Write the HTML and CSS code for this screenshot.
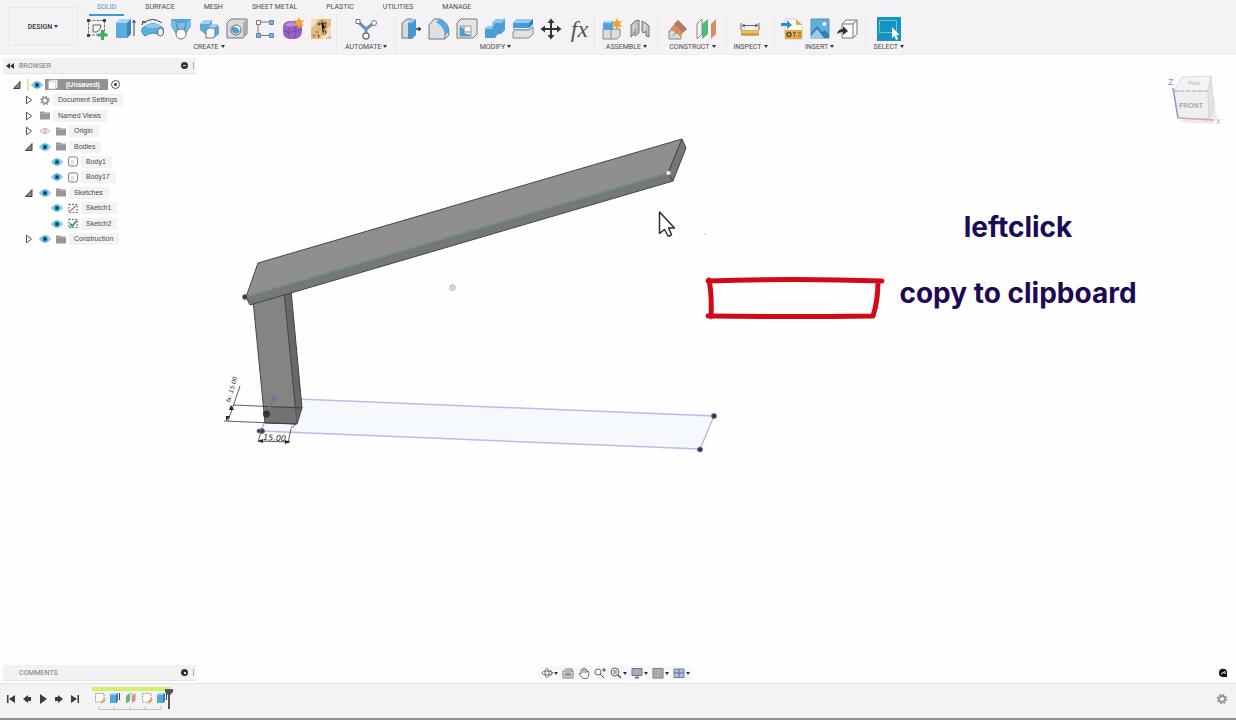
FILE: index.html
```html
<!DOCTYPE html>
<html lang="en">
<head>
<meta charset="utf-8">
<title>Design workspace</title>
<link rel="stylesheet" href="styles.css">
</head>
<body>
<svg class="defs" aria-hidden="true">
  <symbol id="eye" viewBox="0 0 12 10"><path d="M.5 5Q6-1.600 11.500 5Q6 11.600.5 5Z" fill="#9fd8ef" stroke="#4fb3d9"/><circle cx="6" cy="5" r="2.600" fill="#1486b8"/><circle cx="6" cy="5" r="1.300" fill="#0c2f42"/></symbol>
  <symbol id="eye-off" viewBox="0 0 12 10"><path d="M1 5Q6 0 11 5Q6 10 1 5Z" fill="none" stroke="#b9b9bd"/><path d="M3 8.500L9 1.500" stroke="#cfcfd3" stroke-width=".8"/><circle cx="6" cy="5" r="1.500" fill="none" stroke="#b9b9bd"/></symbol>
  <symbol id="folder" viewBox="0 0 12 10"><path d="M1 1H5L6 2H11V9H1Z" fill="#97979a"/><path d="M1 3H11" stroke="#b5b5b8" stroke-width=".7"/></symbol>
  <symbol id="gear" viewBox="0 0 12 12"><circle cx="6" cy="6" r="4.300" fill="none" stroke="#929295" stroke-width="2" stroke-dasharray="1.700 1.680"/><circle cx="6" cy="6" r="2.900" fill="none" stroke="#929295" stroke-width="1.700"/></symbol>
  <symbol id="closed" viewBox="0 0 8 10"><path d="M1.500 1.200V8.800L6.500 5Z" fill="#fff" stroke="#555"/></symbol>
  <symbol id="open" viewBox="0 0 8 10"><path d="M7 1.500V8.500H.5Z" fill="#888" stroke="#444"/></symbol>
  <symbol id="body" viewBox="0 0 12 12"><rect x="1" y="1" width="10" height="10" rx="2.500" fill="#fff" stroke="#6b6b70"/><path d="M4 5H6.500V9H4Z" fill="none" stroke="#c4c4c8" stroke-width=".8"/></symbol>
  <symbol id="s-cube" viewBox="0 0 12 12"><path d="M1 3L3 1H9V9L7 11H1Z" fill="#55a7dc"/><path d="M1 3L3 1H9L7 3Z" fill="#9ed2f0"/><path d="M7 3L9 1V9L7 11Z" fill="#2f7fb5"/><path d="M10.500 1V8" stroke="#444"/></symbol>
  <symbol id="s-sketch" viewBox="0 0 12 12"><path d="M1.500 1.500H10V10H1.500Z" fill="#fdfbf8" stroke="#888" stroke-width=".8" stroke-dasharray="2 1"/><path d="M7 11L11 7" stroke="#e0a445" stroke-width="2"/></symbol>
  <symbol id="s-plane" viewBox="0 0 12 12"><path d="M1 4L5 1V9L1 11.500Z" fill="#67b77d"/><path d="M7 3.500L10.500 1V8.500L7 11Z" fill="#d69268"/><path d="M5 2L7 1V9" stroke="#bbb" fill="none"/></symbol>
</svg>

<header class="ribbon">
  <button class="workspace-switch" type="button">DESIGN <span class="caret"></span></button>
  <div class="ribbon-main">
    <nav class="tabs">
      <button class="tab active" type="button">SOLID</button>
      <button class="tab" type="button">SURFACE</button>
      <button class="tab" type="button">MESH</button>
      <button class="tab" type="button">SHEET METAL</button>
      <button class="tab" type="button">PLASTIC</button>
      <button class="tab" type="button">UTILITIES</button>
      <button class="tab" type="button">MANAGE</button>
    </nav>
    <div class="groups">
      <section class="group">
        <div class="tools">
          <button type="button" aria-label="Create sketch"><svg viewBox="0 0 24 24"><path d="M3.500 3.500H19.500V18H3.500Z" fill="none" stroke="#777" stroke-dasharray="3 1"/><path d="M8 8V15H12Q16 13 16 8Z" fill="none" stroke="#666"/><g fill="#444"><path d="M2 2h3v3H2zM18 2h3v3h-3zM2 17h3v3H2z"/></g><path d="M17.500 13V23M12.500 18H22.500" stroke="#35b35c" stroke-width="3"/></svg></button>
          <button type="button" aria-label="Extrude"><svg viewBox="0 0 24 24"><path d="M3 6L7 2H18V17L14 21H3Z" fill="#5cabdf"/><path d="M3 6L7 2H18L14 6Z" fill="#a5d6f1"/><path d="M14 6L18 2V17L14 21Z" fill="#3886bb"/><path d="M21 19V4M19.500 6L21 3L22.500 6" stroke="#444" fill="none"/></svg></button>
          <button type="button" aria-label="Revolve"><svg viewBox="0 0 24 24"><path d="M1.500 11Q12 2 22 11Q24 15 20 19Q12 13 4 19Q-1 15 1.500 11Z" fill="#5daee1" stroke="#3d8cc0"/><path d="M3 9Q12 4 21 9Q12 13 3 9Z" fill="#92cbee"/><ellipse cx="19.500" cy="15" rx="3" ry="4" fill="#e8f1f8" stroke="#667"/><path d="M2 6Q12-1 21 6M1 8L2 4L5 6" fill="none" stroke="#444"/></svg></button>
          <button type="button" aria-label="Sweep"><svg viewBox="0 0 24 24"><path d="M2 2H22V9L15 20H9L2 9Z" fill="#55a6da"/><path d="M2 2L7 6H17L22 2V9L16 15H8L2 9Z" fill="#78bde8"/><path d="M7 6L9 14M17 6L15 14" stroke="#3583b8"/><circle cx="12" cy="17" r="5" fill="#fff" stroke="#777"/></svg></button>
          <button type="button" aria-label="Loft"><svg viewBox="0 0 24 24"><path d="M3 7L7 3H15V7H20L22 10V17L17 21L8 17L3 13Z" fill="#5aaade"/><path d="M3 7L7 3H15L12 7ZM11 11L15 7H21L18 11Z" fill="#a1d2f0"/><path d="M9 13L12 11H18V19L16 21H9Z" fill="#f4f5f8" stroke="#777"/></svg></button>
          <button type="button" aria-label="Hole"><svg viewBox="0 0 24 24"><path d="M2 6L6 2H22V17L18 21H2Z" fill="#d9dadd" stroke="#777"/><path d="M18 6L22 2V17L18 21Z" fill="#aaacb1"/><circle cx="11" cy="13" r="5" fill="#fff" stroke="#666"/><path d="M7 10Q13 9 15 15Q9 19 7 14Z" fill="#549cd0"/></svg></button>
          <button type="button" aria-label="Rectangular pattern"><svg viewBox="0 0 24 24"><path d="M7 5H17M5 8V16M7 18.500H17" stroke="#777"/><path d="M3.500 3.500h4v4h-4z" fill="#fff" stroke="#777"/><path d="M16.500 3.500h4v4h-4zM3.500 16.500h4v4h-4zM16.500 16.500h4v4h-4z" fill="#7bb6dd" stroke="#568baf"/></svg></button>
          <button type="button" aria-label="Create form"><svg viewBox="0 0 24 24"><path d="M2 11Q2 4 9 4H14Q21 5 21 12V15Q20 22 13 22H9Q2 21 2 15Z" fill="#9762c8"/><path d="M4 8Q8 4 14 6Q16 8 12 9Q7 11 4 8Z" fill="#bc92df"/><path d="M3 14Q9 17 14 14L21 12M14 9Q16 15 13 22M8 11L8 21" stroke="#7a48a8" fill="none"/><path d="M18 0L19.500 3.500L23 3L21 6L23 9L19.500 8.500L18 12L16.500 8.500L13 9L15 6L13 3L16.500 3.500Z" fill="#eda52d"/></svg></button>
          <button type="button" aria-label="Texture"><svg viewBox="0 0 24 24"><path d="M2 2H22V22H2Z" fill="#dfbf88"/><path d="M2 2H9L5 9L2 11ZM17 12L22 9V18L16 22H11Z" fill="#f0dfbd"/><path d="M4 20L11 12M12 3L17 9L14 18" stroke="#c4934f" stroke-width="3" stroke-dasharray="3 2"/><path d="M8 7l3-2 1 2-2 2zM15 4l3 2-2 2zM16 13l2 2-2 3zM9 17l2 2-2 2z" fill="#745025"/></svg></button>
        </div>
        <button class="menu" type="button">CREATE <span class="caret"></span></button>
      </section>
      <section class="group wide">
        <div class="tools">
          <button type="button" aria-label="Automate"><svg viewBox="0 0 24 24"><path d="M4 5L12 12L20 6M12 12V18" stroke="#6894b5" stroke-width="3" fill="none"/><path d="M2 2.500h4v4H2z" fill="#fff" stroke="#777"/><circle cx="20" cy="6" r="2.500" fill="#fff" stroke="#777"/><circle cx="12" cy="19" r="3" fill="#fff" stroke="#777" stroke-width="1.500"/></svg></button>
        </div>
        <button class="menu" type="button">AUTOMATE <span class="caret"></span></button>
      </section>
      <section class="group">
        <div class="tools">
          <button type="button" aria-label="Press pull"><svg viewBox="0 0 24 24"><path d="M3 6L8 2H13V21H3Z" fill="#d7d8db" stroke="#777"/><path d="M9 6L13 2H17V18L13 22H9Z" fill="#4398d0"/><path d="M9 6L13 2H17L13 6Z" fill="#91cbee"/><path d="M17 12H20" stroke="#333" stroke-width="1.500"/><path d="M19.500 9.500L22.500 12L19.500 14.500Z" fill="#333"/></svg></button>
          <button type="button" aria-label="Fillet"><svg viewBox="0 0 24 24"><path d="M2 8L7 2H13Q22 6 22 15V18L18 22H2Z" fill="#dfe0e3" stroke="#777"/><path d="M9 5L13 2Q22 6 22 15L18 18Q17 10 9 5Z" fill="#54a8dd"/><path d="M18 17V22" stroke="#777"/></svg></button>
          <button type="button" aria-label="Shell"><svg viewBox="0 0 24 24"><path d="M2 6L6 2H22V17L18 21H2Z" fill="#e4e5e7" stroke="#777"/><path d="M5 9H16V19H5Z" fill="#f8f8fa" stroke="#999"/><path d="M5 9L9 12V16L16 18L15 19H5Z" fill="#4c9ed2"/><path d="M9 9V15H16" stroke="#888" fill="none"/></svg></button>
          <button type="button" aria-label="Combine"><svg viewBox="0 0 24 24"><path d="M2 12L5 9H9V6L13 2H22V13L18 17H15L12 21H2Z" fill="#4c9fd5"/><path d="M2 12L5 9H9L9 6L13 2H22L19 6H12L9 12Z" fill="#8dc9ed"/></svg></button>
          <button type="button" aria-label="Split body"><svg viewBox="0 0 24 24"><path d="M2 6L6 2H22L18 6V11H2Z" fill="#459bd2"/><path d="M2 6L6 2H22L18 6Z" fill="#92cbef"/><path d="M18 6L22 2V7L18 11Z" fill="#3183b8"/><path d="M2 15L4 13H18L22 10V17L18 21H2Z" fill="#e1e2e5" stroke="#888"/><path d="M2 12.500H18L22 8.500" stroke="#64b5e5" fill="none"/></svg></button>
          <button type="button" aria-label="Move"><svg viewBox="0 0 24 24"><path d="M12 4V20M4 12H20" stroke="#333" stroke-width="2"/><path d="M12 1.500L15.500 6H8.500ZM12 22.500L8.500 18H15.500ZM1.500 12L6 8.500V15.500ZM22.500 12L18 8.500V15.500Z" fill="#333"/></svg></button>
          <button class="fx" type="button" aria-label="Parameters">fx</button>
        </div>
        <button class="menu" type="button">MODIFY <span class="caret"></span></button>
      </section>
      <section class="group narrow">
        <div class="tools">
          <button type="button" aria-label="New component"><svg viewBox="0 0 24 24"><path d="M3 12H20V19L17 22H3Z" fill="#dcdde0" stroke="#888"/><path d="M11 12V22" stroke="#888"/><path d="M3 6L5 4H13V13H3Z" fill="#52a5dc"/><path d="M3 6L5 4H13L11 6Z" fill="#a5d6f1"/><path d="M17 1L18.500 4.500L22 4L20 7L22 10L18.500 9.500L17 13L15.500 9.500L12 10L14 7L12 4L15.500 4.500Z" fill="#e8a62b"/></svg></button>
          <button type="button" aria-label="Joint"><svg viewBox="0 0 24 24"><path d="M3 8L7 4L11 3V16L7 19V12L5 18L3 20ZM14 4L19 7L21 9V20L18 19V14L16 16L14 15Z" fill="#bfc1c4" stroke="#777"/><path d="M6 8V15M17 7V13" stroke="#eee"/></svg></button>
        </div>
        <button class="menu" type="button">ASSEMBLE <span class="caret"></span></button>
      </section>
      <section class="group medium">
        <div class="tools">
          <button type="button" aria-label="Offset plane"><svg viewBox="0 0 24 24"><path d="M3 14L12 11L15 17V22H3Z" fill="#dcdcd9" stroke="#888"/><path d="M4 12L12 3L21 12L14 19Z" fill="#d78d66"/><path d="M9 7L17 15M12 13L7 19" stroke="#6d9870"/><path d="M12 3L21 12L17 15L8 7Z" fill="#b67761"/></svg></button>
          <button type="button" aria-label="Midplane"><svg viewBox="0 0 24 24"><path d="M3 7L8 2V17L3 22Z" fill="#f4f4f5" stroke="#888"/><path d="M8 7L14 2V17L8 22Z" fill="#55b775"/><path d="M17 7L22 2V17L17 22Z" fill="#dc8b68"/></svg></button>
        </div>
        <button class="menu" type="button">CONSTRUCT <span class="caret"></span></button>
      </section>
      <section class="group medium">
        <div class="tools">
          <button type="button" aria-label="Measure"><svg viewBox="0 0 24 24"><path d="M3 6V13M21 6V13M4 8.500H20M7 7L4 8.500L7 10M17 7L20 8.500L17 10" stroke="#666" fill="none"/><path d="M3 13H21V18H3Z" fill="#e2ac42"/><path d="M5 15H20" stroke="#fff3c9" stroke-dasharray="1 1"/><path d="M3 18H21" stroke="#a17a31"/></svg></button>
        </div>
        <button class="menu" type="button">INSPECT <span class="caret"></span></button>
      </section>
      <section class="group narrow">
        <div class="tools">
          <button type="button" aria-label="Insert derive"><svg viewBox="0 0 24 24"><path d="M5 2H16L22 8V22H5Z" fill="#fff" stroke="#ccc"/><path d="M16 2L22 8H16ZM5 13H22V22H5Z" fill="#e6a93b"/><path d="M1 6H7V3L12 8L7 12V9H1Z" fill="#348bc3"/><circle cx="9" cy="17.500" r="2" fill="none" stroke="#554" stroke-width="1.500"/><path d="M13 15.500H16M14.500 15V20M18 16H21M18 19H21" stroke="#665"/></svg></button>
          <button type="button" aria-label="Canvas"><svg viewBox="0 0 24 24"><path d="M3 2H21V21H3Z" fill="#62ade0" stroke="#5b93bb"/><path d="M3 16L9 9L14 15L17 13L21 18V21H3Z" fill="#3280b3"/><path d="M3 19L9 12L16 21H3Z" fill="#9acbe8"/><circle cx="16.500" cy="7" r="2" fill="#f2faff"/></svg></button>
          <button type="button" aria-label="Insert component"><svg viewBox="0 0 24 24"><path d="M6 7L10 3H21V17L17 21H6Z" fill="#fafafc" stroke="#777"/><path d="M6 7H17V21M17 7L21 3" fill="none" stroke="#777"/><path d="M1 17Q2 12 7 12V9L12 14L7 18V15Q4 15 1 17Z" fill="#333"/></svg></button>
        </div>
        <button class="menu" type="button">INSERT <span class="caret"></span></button>
      </section>
      <section class="group wide last">
        <div class="tools">
          <button type="button" aria-label="Select"><svg viewBox="0 0 24 24"><path d="M0 0H24V24H0Z" fill="#1594c2"/><path d="M2.500 3.500H19.500V15.500H2.500Z" fill="none" stroke="#8de0d3" stroke-dasharray="2 1"/><path d="M15 10V21L17.500 19L19 23L21 22L19.500 18H22.500Z" fill="#fff"/></svg></button>
        </div>
        <button class="menu" type="button">SELECT <span class="caret"></span></button>
      </section>
    </div>
  </div>
</header>

<main class="workspace">
  <svg class="scene" viewBox="0 55 1236 628" preserveAspectRatio="xMinYMin meet">
    <polygon points="274,398 714,416 700,449 261,431" fill="#f5f9fe" stroke="#c8b5e8" stroke-width="1.500"/>
    <g stroke="#454545" stroke-linejoin="round">
      <polygon points="253,300 285,291 297,424 265,423" fill="#848583"/>
      <polygon points="284,292 291,290 302,408 297,424" fill="#686966"/>
      <polygon points="258,263 682,139 668,173 246,297" fill="#8f8f8d"/>
      <polygon points="246,297 668,173 673,181 250,305" fill="#747977"/>
      <polygon points="682,139 686,148 673,181 668,173" fill="#777671"/>
    </g>
    <path d="M246 297L668 173" stroke="#7fa7b1"/>
    <polygon points="265,406 302,407 297,424 265,423" fill="#666765" opacity=".6"/>
    <g fill="none" stroke="#333"><path d="M233 405L302 408M224 421L296 424M240 386L228 421M261 432L258 442M291 429L288 443M258 441L290 442M291 428L296 424" stroke-width=".8"/><path d="M266 415L273 400" stroke="#777" stroke-width="2"/></g>
    <path d="M231 405L234 410H229ZM226 421L230 416L226 416ZM258 441L263 439V443ZM290 442L285 440V444Z" fill="#222"/>
    <g fill="#393348" stroke="#766f94"><circle cx="245" cy="297" r="2.500"/><circle cx="714" cy="416" r="2.500"/><circle cx="700" cy="449.500" r="2.500"/><circle cx="262" cy="431" r="2.500"/><circle cx="259" cy="431" r="2"/></g>
    <circle cx="266.500" cy="414" r="3.500" fill="#333"/>
    <circle cx="274" cy="398" r="3" fill="#79719e"/>
    <circle cx="668.500" cy="173" r="2" fill="#fff"/>
    <circle cx="452.500" cy="287.500" r="3" fill="#d5d5d5" stroke="#b9b9b9" stroke-width=".7"/>
    <circle cx="705" cy="234" r=".7" fill="#aaa"/>
    <text class="dimension" x="263" y="440" transform="rotate(3 263 440)">15.00</text>
    <text class="dimension side" x="230" y="403" transform="rotate(-74 230 403)">fx: 15.00</text>
    <path d="M659.500 212V233.500L664.500 229.500L668 236Q670 236.500 671.500 234.500L668.500 228H674.500Z" fill="#fff" stroke="#2f2b35" stroke-width="1.500" stroke-linejoin="round"/>
    <path d="M708 281Q795 278 882 281M709 280Q712 294 711 317M878 281Q878 301 873 316M708 316Q790 317 873 316" fill="none" stroke="#d20a18" stroke-width="5" stroke-linecap="round" stroke-linejoin="round"/>
    <text class="note" x="1018" y="237" text-anchor="middle">leftclick</text>
    <text class="note" x="1018" y="303" text-anchor="middle">copy to clipboard</text>
    <g stroke="#d4d4d8" stroke-width=".8">
      <path d="M1180 122L1212 124L1217 118L1213 92Z" fill="#dedce0" stroke="none" opacity=".6"/>
      <polygon points="1182,77 1211,76 1208,91 1174,91" fill="#f4f4f6"/>
      <polygon points="1174,91 1208,91 1209,119 1178,118" fill="#efeff1"/>
      <polygon points="1208,91 1211,76 1214,108 1209,119" fill="#e2e2e5"/>
      <path d="M1174 91H1208" stroke="#aaa" stroke-dasharray="4 2"/>
    </g>
    <path d="M1173 88L1178 118" stroke="#9490dc" stroke-width="1.500"/><path d="M1178 118L1214 120" stroke="#e2a0aa" stroke-width="1.500"/>
    <text class="cube-face" x="1191" y="108" text-anchor="middle">FRONT</text><text class="cube-top" x="1194" y="85" text-anchor="middle">Point</text>
    <text class="axis-z" x="1168" y="85">Z</text><text class="axis-x" x="1216" y="124">X</text>
  </svg>

  <aside class="browser">
    <div class="panel-head"><svg class="collapse" viewBox="0 0 8 6"><path d="M4 0V6L0 3ZM8 0V6L4 3Z" fill="#333"/></svg><span>BROWSER</span><button class="dot minus" type="button" aria-label="Minimize browser"></button><i class="grip"></i></div>
    <ul class="tree">
      <li class="root"><button type="button" aria-label="Collapse"><svg><use href="#open"/></svg></button><i class="active-bar"></i><button type="button" aria-label="Visibility"><svg><use href="#eye"/></svg></button><span class="chip"><svg viewBox="0 0 12 12"><path d="M1 3L3 1H11V9L9 11H1Z" fill="#fff" stroke="#bbb"/><path d="M1 3H9V11M9 3L11 1" fill="none" stroke="#ccc"/></svg>(Unsaved)</span><input type="radio" checked aria-label="Activate component"></li>
      <li><button type="button" aria-label="Expand"><svg><use href="#closed"/></svg></button><svg class="icon"><use href="#gear"/></svg><span class="label">Document Settings</span></li>
      <li><button type="button" aria-label="Expand"><svg><use href="#closed"/></svg></button><svg class="icon"><use href="#folder"/></svg><span class="label">Named Views</span></li>
      <li><button type="button" aria-label="Expand"><svg><use href="#closed"/></svg></button><button type="button" aria-label="Visibility"><svg><use href="#eye-off"/></svg></button><svg class="icon"><use href="#folder"/></svg><span class="label">Origin</span></li>
      <li><button type="button" aria-label="Collapse"><svg><use href="#open"/></svg></button><button type="button" aria-label="Visibility"><svg><use href="#eye"/></svg></button><svg class="icon"><use href="#folder"/></svg><span class="label">Bodies</span></li>
      <li class="leaf"><button type="button" aria-label="Visibility"><svg><use href="#eye"/></svg></button><svg class="icon"><use href="#body"/></svg><span class="label">Body1</span></li>
      <li class="leaf"><button type="button" aria-label="Visibility"><svg><use href="#eye"/></svg></button><svg class="icon"><use href="#body"/></svg><span class="label">Body17</span></li>
      <li><button type="button" aria-label="Collapse"><svg><use href="#open"/></svg></button><button type="button" aria-label="Visibility"><svg><use href="#eye"/></svg></button><svg class="icon"><use href="#folder"/></svg><span class="label">Sketches</span></li>
      <li class="leaf"><button type="button" aria-label="Visibility"><svg><use href="#eye"/></svg></button><svg class="icon" viewBox="0 0 12 12"><path d="M1.500 1.500H10.500V10.500H1.500Z" fill="#fff" stroke="#444" stroke-dasharray="2 1.500"/><path d="M3 9L9 3" stroke="#d0754d" stroke-width="1.500"/></svg><span class="label">Sketch1</span></li>
      <li class="leaf"><button type="button" aria-label="Visibility"><svg><use href="#eye"/></svg></button><svg class="icon" viewBox="0 0 12 12"><path d="M1.500 1.500H10.500V10.500H1.500Z" fill="#fff" stroke="#444" stroke-dasharray="2 1.500"/><path d="M3 6L5 9L10 3" stroke="#379b54" stroke-width="2" fill="none"/></svg><span class="label">Sketch2</span></li>
      <li><button type="button" aria-label="Expand"><svg><use href="#closed"/></svg></button><button type="button" aria-label="Visibility"><svg><use href="#eye"/></svg></button><svg class="icon"><use href="#folder"/></svg><span class="label">Construction</span></li>
    </ul>
  </aside>

  <div class="dock">
    <div class="panel-head comments"><span>COMMENTS</span><button class="dot plus" type="button" aria-label="Add comment"></button><i class="grip"></i></div>
    <div class="view-tools">
      <button type="button" aria-label="Orbit"><svg viewBox="0 0 12 12"><ellipse cx="6" cy="6" rx="5" ry="2" fill="none" stroke="#777"/><ellipse cx="6" cy="6" rx="2" ry="4.500" fill="none" stroke="#777"/><path d="M9 3L12 6L9 9" fill="none" stroke="#777"/></svg><span class="caret"></span></button>
      <button type="button" aria-label="Look at"><svg viewBox="0 0 12 12"><path d="M1 4H11V11H1ZM3 2H10V4M3 6H9V9H3ZM4 7.500H8" fill="none" stroke="#777"/></svg></button>
      <button type="button" aria-label="Pan"><svg viewBox="0 0 12 12"><path d="M3 7V3Q4 2 5 3V1.500Q6 .5 7 1.500V3Q8 1 9 3V5Q10 3 11 5Q11 10 9 11.500H5L1 7Q2 5 3 7M5 3V6M7 3V6M9 4V6" fill="#fff" stroke="#666" stroke-width=".9"/></svg></button>
      <button type="button" aria-label="Zoom"><svg viewBox="0 0 12 12"><circle cx="4" cy="5" r="3" fill="#fff" stroke="#666"/><path d="M6 7L10 11M10 1V5M8 3H12" stroke="#555"/></svg></button>
      <button type="button" aria-label="Fit"><svg viewBox="0 0 12 12"><circle cx="5" cy="5" r="4" fill="#eee" stroke="#666"/><path d="M3 3H7V7H3Z" fill="#aaa"/><path d="M8 8L11 11" stroke="#555" stroke-width="1.500"/></svg><span class="caret"></span></button>
      <button type="button" aria-label="Display settings"><svg viewBox="0 0 12 12"><path d="M1 1.500H11V8.500H1Z" fill="#9aaecb" stroke="#777"/><path d="M4 10.500H8" stroke="#777" stroke-width="2"/></svg><span class="caret"></span></button>
      <button type="button" aria-label="Grid"><svg viewBox="0 0 12 12"><path d="M1 1.500H11V11H1Z" fill="#bbb" stroke="#777"/><path d="M1 4H11M1 6H11M1 8H11M4 1V11M8 1V11" stroke="#999" stroke-width=".7"/></svg><span class="caret"></span></button>
      <button type="button" aria-label="Viewports"><svg viewBox="0 0 12 12"><path d="M1 2H11V10.500H1Z" fill="#a8c2df" stroke="#6c7f9d"/><path d="M6 2V10.500M1 6H11" stroke="#5b7193"/></svg><span class="caret"></span></button>
    </div>
    <button class="status" type="button" aria-label="Status"><svg viewBox="0 0 10 10"><path d="M1 5A4 4 0 1 1 9 4.500V9H5A4 4 0 0 1 1 5Z" fill="#111"/><path d="M3 6L7 3.500V6" fill="none" stroke="#fff"/></svg></button>
  </div>
</main>

<footer class="timeline">
  <div class="playback">
    <button type="button" aria-label="To start"><svg viewBox="0 0 10 10"><path d="M1 1H2.500V9H1ZM9 1V9L3 5Z"/></svg></button>
    <button type="button" aria-label="Step back"><svg viewBox="0 0 10 10"><path d="M1 5L6 1V3H9V7H6V9Z"/></svg></button>
    <button type="button" aria-label="Play"><svg viewBox="0 0 10 10"><path d="M2 0V10L9 5Z"/></svg></button>
    <button type="button" aria-label="Step forward"><svg viewBox="0 0 10 10"><path d="M9 5L4 1V3H1V7H4V9Z"/></svg></button>
    <button type="button" aria-label="To end"><svg viewBox="0 0 10 10"><path d="M9 1H7.500V9H9ZM1 1V9L7 5Z"/></svg></button>
  </div>
  <div class="history">
    <div class="features">
      <button type="button" aria-label="Sketch1"><svg><use href="#s-sketch"/></svg></button>
      <button type="button" aria-label="Extrude1"><svg><use href="#s-cube"/></svg></button>
      <button type="button" aria-label="Plane1"><svg><use href="#s-plane"/></svg></button>
      <button type="button" aria-label="Sketch2"><svg><use href="#s-sketch"/></svg></button>
      <button type="button" aria-label="Extrude2"><svg><use href="#s-cube"/></svg></button>
    </div>
    <svg class="track" viewBox="0 0 78 5"><path d="M7 0V3.500H69V0M22 0V3M38 0V3M53 0V3" fill="none" stroke="#c2c2c6"/></svg>
  </div>
  <svg class="marker" viewBox="0 0 10 22"><path d="M1 1H9V4L6 7V21H4V7L1 4Z" fill="#555"/></svg>
  <button class="settings" type="button" aria-label="Timeline settings"><svg><use href="#gear"/></svg></button>
</footer>
</body>
</html>
```

FILE: styles.css
```css
* { box-sizing: border-box; }
body {
  margin: 0;
  min-height: 100vh;
  display: flex;
  flex-direction: column;
  background: #fefefe;
  color: #4a4a4e;
  font: 7px/10px Roboto, "Liberation Sans", sans-serif;
}
button {
  margin: 0;
  padding: 0;
  border: 0;
  background: none;
  color: inherit;
  font: inherit;
  display: flex;
  align-items: center;
  justify-content: center;
}
svg { display: block; flex: none; }
.defs { position: absolute; width: 0; height: 0; }
.caret {
  border: 2px solid transparent;
  border-top: 3px solid #333;
  border-bottom: 0;
  margin-left: 2px;
}

.ribbon {
  display: flex;
  min-height: 55px;
  background: #f4f2f5;
  border-bottom: 1px solid #f0eef1;
}
.workspace-switch {
  width: 70px;
  height: 39px;
  margin: 7px 4px 0 8px;
  border: 1px solid #eae8eb;
  color: #333;
  font-weight: 500;
}
.ribbon-main { flex: 1; }
.tabs { display: flex; padding-left: 7px; }
.tab { height: 16px; padding: 0 8px; margin-right: 13px; border-bottom: 2px solid transparent; }
.tab.active { color: #3a9cc8; border-bottom-color: #3a9cc8; }
.groups { display: flex; }
.group { padding: 0 1px; border-right: 1px solid #e8e6e9; }
.group.narrow { padding: 0 3px; }
.group.medium { padding: 0 6px; }
.group.wide { padding: 0 8px; }
.group.last { border-right: 0; }
.tools { display: flex; justify-content: center; }
.tools button { width: 28px; height: 25px; }
.tools svg { width: 24px; height: 24px; }
.tools .fx { font: italic 24px/24px "Liberation Serif", serif; color: #555; }
.menu { width: 100%; height: 11px; white-space: nowrap; }

.workspace { flex: 1; position: relative; display: flex; flex-direction: column; }
.scene { position: absolute; left: 0; top: 0; width: 100%; }
.note { font: 700 28px Inter, sans-serif; fill: #1d0a56; }
.dimension { font: italic 8px "DejaVu Sans", sans-serif; fill: #222; }
.dimension.side { font-size: 6px; }
.cube-face { font: 700 7px "Liberation Sans", sans-serif; fill: #a8a8ad; }
.cube-top { font: 5px "Liberation Sans", sans-serif; fill: #aaa; }
.axis-z { font: 9px "Liberation Sans", sans-serif; fill: #8c86dc; }
.axis-x { font: 7px "Liberation Sans", sans-serif; fill: #e58d99; }

.browser { position: relative; width: 196px; padding: 3px 0 0 3px; }
.panel-head {
  display: flex;
  align-items: center;
  height: 16px;
  padding: 0 2px 0 3px;
  background: #f2f1f3;
  border-bottom: 1px solid #e4e2e5;
  color: #77777b;
}
.panel-head span { margin-left: 5px; }
.collapse { width: 8px; height: 6px; }
.dot { width: 7px; height: 7px; margin-left: auto; border-radius: 50%; background: #333; }
.dot::after { content: ""; width: 3px; height: 1px; background: #ddd; }
.dot.plus::after { width: 2px; height: 2px; }
.grip { width: 2px; height: 7px; margin-left: 4px; border-right: 1px solid #aaa; }
.tree {
  display: grid;
  grid-auto-rows: 1fr;
  min-height: 170px;
  margin: 3px 0 0;
  padding: 0;
  list-style: none;
  font-family: "Liberation Sans", sans-serif;
}
.tree li { display: flex; align-items: center; padding-left: 18px; }
.tree li.root { padding-left: 6px; }
.tree li.leaf { padding-left: 46px; }
.tree button { width: 16px; height: 12px; }
.tree button svg { width: 12px; height: 10px; }
.icon { width: 12px; height: 11px; margin: 0 2px; }
.label { padding: 0 6px 0 5px; background: #f3f2f4; line-height: 12px; }
.chip {
  display: flex;
  align-items: center;
  gap: 7px;
  height: 11px;
  padding: 0 8px 0 2px;
  background: #929294;
  color: #fff;
  font-weight: 700;
}
.chip svg { width: 12px; height: 11px; }
.active-bar { width: 2px; height: 12px; margin: 0 0 0 2px; background: #dcef8a; }
.tree input {
  appearance: none;
  width: 9px;
  height: 9px;
  margin: 0 0 0 3px;
  border: 1px solid #555;
  border-radius: 50%;
  background: radial-gradient(#444 0 1px, #fff 2px);
}

.dock {
  position: relative;
  display: grid;
  grid-template-columns: 1fr auto 1fr;
  align-items: center;
  margin-top: auto;
  padding: 0 8px 2px 3px;
}
.comments { width: 193px; }
.comments span { margin-left: 13px; }
.view-tools {
  display: flex;
  align-items: center;
  gap: 4px;
  height: 14px;
  padding: 0 2px;
  background: #f7f6f8;
}
.view-tools svg { width: 12px; height: 12px; }
.view-tools .caret { margin-left: 1px; }
.status { justify-self: end; }
.status svg { width: 10px; height: 10px; }

.timeline {
  display: flex;
  align-items: center;
  height: 37px;
  padding: 0 8px 4px 3px;
  background: #f3f2f4;
  border-top: 1px solid #e6e4e7;
  border-bottom: 2px solid #909092;
}
.playback { display: flex; }
.playback button { width: 16px; height: 16px; }
.playback svg { width: 10px; height: 10px; fill: #3c3c40; }
.history { margin-left: 9px; }
.features { display: flex; width: 78px; padding-top: 3px; background: linear-gradient(#d2f06a 0 4px, transparent 4px); }
.features button { flex: 1; height: 16px; }
.features svg { width: 12px; height: 12px; }
.track { width: 78px; height: 5px; }
.marker { width: 10px; height: 22px; margin-left: -6px; }
.settings { margin-left: auto; }
.settings svg { width: 12px; height: 12px; }
```
